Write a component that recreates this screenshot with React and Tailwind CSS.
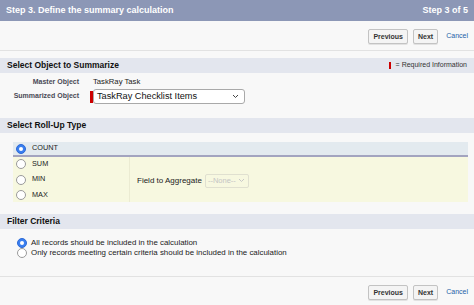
const Radio = ({ checked }) => (
  checked ? (
    <span className="w-[10px] h-[10px] rounded-full bg-[#3a7ff0] border border-[#2d6ad6] flex items-center justify-center shrink-0">
      <span className="w-[4px] h-[4px] rounded-full bg-white"></span>
    </span>
  ) : (
    <span className="w-[10px] h-[10px] rounded-full bg-white border border-[#9a9a9a] shrink-0"></span>
  )
);

const Button = ({ children }) => (
  <button className="h-[15px] px-[4px] bg-[#f4f4f4] border border-[#c3c3c3] rounded-[2px] text-[7px] font-bold text-[#333] leading-none shadow-[0_1px_0_#e2e2e2]">
    {children}
  </button>
);

const ButtonBar = () => (
  <div className="flex items-center justify-end gap-[5px] pr-[6px]">
    <Button>Previous</Button>
    <Button>Next</Button>
    <a className="ml-[3px] text-[7px] text-[#1d5fa8]">Cancel</a>
  </div>
);

const SectionHeader = ({ title, children }) => (
  <div className="h-[15px] bg-[#e3e6ee] flex items-center justify-between px-[7px]">
    <span className="text-[8.5px] font-bold text-[#111]">{title}</span>
    {children}
  </div>
);

const Chevron = ({ color }) => (
  <svg width="7" height="5" viewBox="0 0 7 5" fill="none">
    <path d="M1 1l2.5 2.5L6 1" stroke={color} strokeWidth="1" />
  </svg>
);

export default function App() {
  return (
    <div className="w-[474px] h-[305px] overflow-hidden bg-[#f8f8f8] font-['Liberation_Sans',Arial,sans-serif] text-[#222]">
      <div className="h-[21px] bg-[#8c97b6] flex items-center justify-between pl-[6px] pr-[6px] text-white font-bold text-[9px]">
        <span>Step 3. Define the summary calculation</span>
        <span>Step 3 of 5</span>
      </div>

      <div className="h-[30px] pt-[2px] flex items-center justify-end border-b border-[#e2e2e2]">
        <ButtonBar />
      </div>

      <div className="mt-[7px]">
        <SectionHeader title="Select Object to Summarize">
          <span className="flex items-center gap-[5px] text-[7px] text-[#333]">
            <span className="w-[2px] h-[7px] bg-[#c00]"></span>
            = Required Information
          </span>
        </SectionHeader>

        <div className="mt-[2px] h-[14px] flex items-center">
          <span className="w-[79px] text-right text-[7px] font-bold text-[#4a4a56]">Master Object</span>
          <span className="ml-[14px] text-[7.7px]">TaskRay Task</span>
        </div>
        <div className="h-[15px] flex items-center">
          <span className="w-[79px] text-right text-[7px] font-bold text-[#4a4a56]">Summarized Object</span>
          <span className="ml-[11px] w-[3px] h-[12px] bg-[#c00]"></span>
          <div className="w-[152px] h-[15px] bg-white border border-[#a9a9a9] rounded-[3px] flex items-center justify-between pl-[3px] pr-[5px]">
            <span className="text-[9.2px] text-[#111]">TaskRay Checklist Items</span>
            <Chevron color="#444" />
          </div>
        </div>
      </div>

      <div className="mt-[14px]">
        <SectionHeader title="Select Roll-Up Type" />
        <div className="mt-[9px] ml-[13px] mr-[6px]">
          <div className="h-[15px] bg-[#e3eaef] border-b-2 border-[#a3a4bf] flex items-center gap-[6px] pl-[3px]">
            <Radio checked />
            <span className="text-[7.3px]">COUNT</span>
          </div>
          <div className="h-[45px] bg-[#f7f8e0] flex">
            <div className="w-[117px] flex flex-col justify-center gap-[5.5px] pl-[3px] border-r border-[#ebebd2]">
              {['SUM', 'MIN', 'MAX'].map((t) => (
                <div key={t} className="flex items-center gap-[6px] h-[10px]">
                  <Radio />
                  <span className="text-[7.3px]">{t}</span>
                </div>
              ))}
            </div>
            <div className="flex items-center pl-[7px] pt-[2px]">
              <span className="text-[8px]">Field to Aggregate</span>
              <div className="ml-[3px] w-[44px] h-[14px] border border-[#e0e0d0] rounded-[2px] flex items-center justify-between pl-[2px] pr-[3px]">
                <span className="text-[7.5px] text-[#c4c4c4]">--None--</span>
                <Chevron color="#c8c8c8" />
              </div>
            </div>
          </div>
        </div>
      </div>

      <div className="mt-[12px]">
        <SectionHeader title="Filter Criteria" />
        <div className="mt-[9px] ml-[17px] flex flex-col">
          <div className="h-[10px] flex items-center gap-[4px]">
            <Radio checked />
            <span className="text-[7.9px]">All records should be included in the calculation</span>
          </div>
          <div className="h-[10px] flex items-center gap-[4px]">
            <Radio />
            <span className="text-[7.9px]">Only records meeting certain criteria should be included in the calculation</span>
          </div>
        </div>
      </div>

      <div className="mt-[18px] border-t border-[#e2e2e2] pt-[8px]">
        <ButtonBar />
      </div>
    </div>
  );
}
